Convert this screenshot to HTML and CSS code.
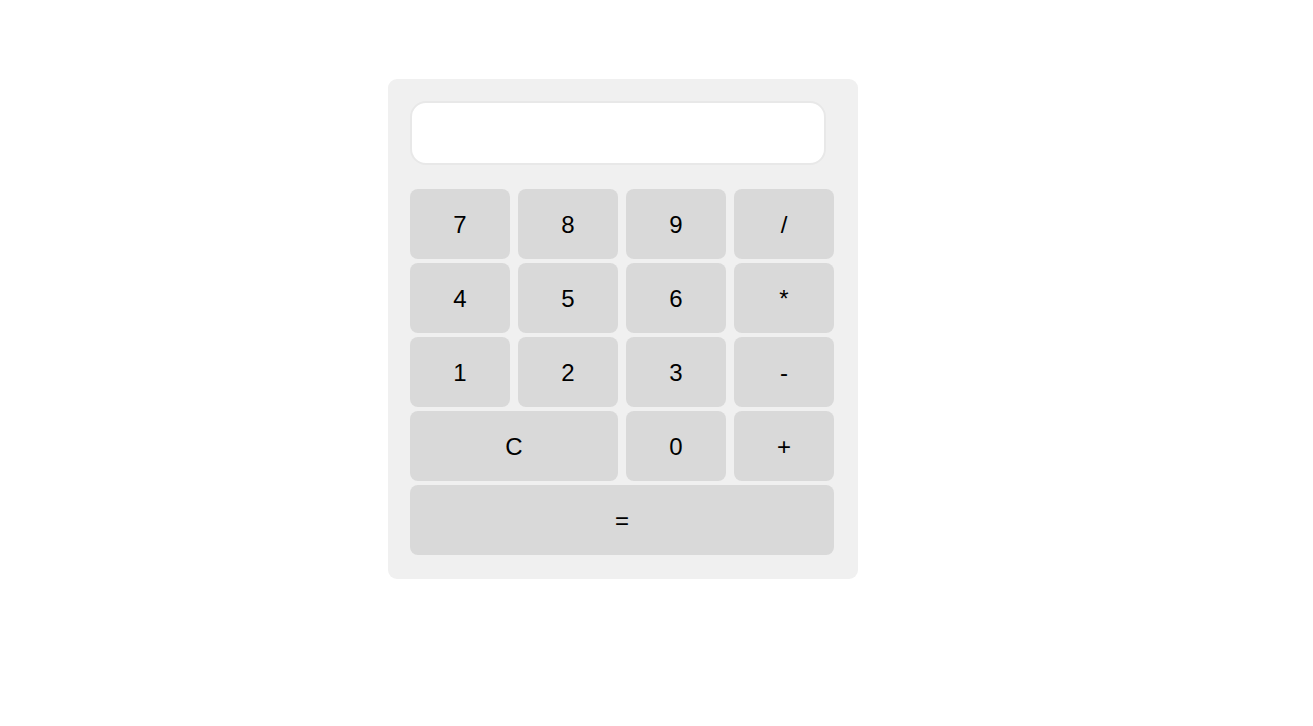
FILE: index.html
```html
<!DOCTYPE html>
<html>
<head>
<meta charset="utf-8">
<link rel="stylesheet" href="styles.css">
</head>
<body>
<div class="calculator">
  <input class="display" type="text" readonly>
  <div class="keys">
    <button class="key">7</button>
    <button class="key">8</button>
    <button class="key">9</button>
    <button class="key">/</button>
    <button class="key">4</button>
    <button class="key">5</button>
    <button class="key">6</button>
    <button class="key">*</button>
    <button class="key">1</button>
    <button class="key">2</button>
    <button class="key">3</button>
    <button class="key">-</button>
    <button class="key wide">C</button>
    <button class="key">0</button>
    <button class="key">+</button>
    <button class="key full">=</button>
  </div>
</div>
</body>
</html>
```
FILE: styles.css
```css
html, body {
  margin: 0;
  padding: 0;
  background: #ffffff;
}
body {
  font-family: "Liberation Sans", Arial, sans-serif;
}
.calculator {
  box-sizing: border-box;
  width: 470px;
  height: 500px;
  margin: 79px 0 0 388px;
  padding: 22px 24px 24px 22px;
  background: #f0f0f0;
  border-radius: 9px;
}
.display {
  display: block;
  box-sizing: border-box;
  width: 416px;
  height: 64px;
  margin: 0 0 24px 0;
  border: 2px solid #e8e8e8;
  border-radius: 16px;
  background: #ffffff;
  outline: none;
  padding: 0 12px;
  font-size: 24px;
}
.keys {
  display: grid;
  grid-template-columns: repeat(4, 100px);
  grid-auto-rows: 70px;
  column-gap: 8px;
  row-gap: 4px;
}
.key {
  border: none;
  border-radius: 8px;
  background: #d9d9d9;
  color: #000;
  font-family: "Liberation Sans", Arial, sans-serif;
  font-size: 24px;
  padding: 2px 0 0 0;
  margin: 0;
}
.wide {
  grid-column: span 2;
}
.full {
  grid-column: span 4;
}
```
